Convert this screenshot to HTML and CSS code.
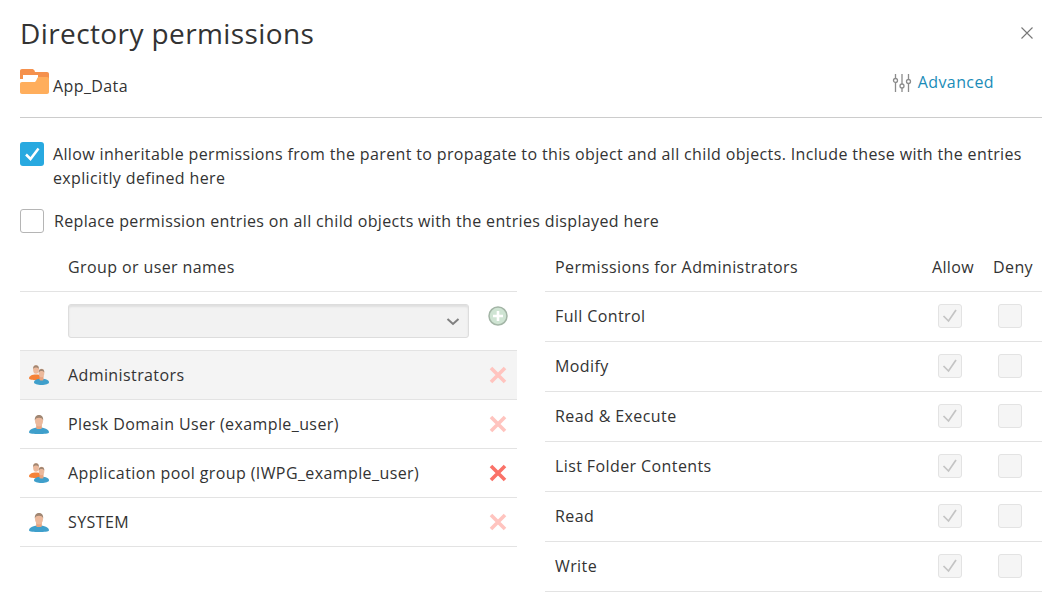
FILE: index.html
```html
<!DOCTYPE html>
<html lang="en">
<head>
<meta charset="utf-8">
<title>Directory permissions</title>
<link rel="stylesheet" href="styles.css">
</head>
<body>
<svg class="defs" width="0" height="0">
  <defs>
    <symbol id="user" viewBox="0 0 20 20">
      <path d="M0 18.500C0 15 5 13.500 10 13.500S20 15 20 18.500C20 19.500 15 20 10 20S0 19.500 0 18.500Z" fill="#3f9fcb"/>
      <path d="M7.200 11h5.600v3.200C12 15.400 8 15.400 7.200 14.200Z" fill="#e8a47f"/>
      <ellipse cx="10" cy="7" rx="4" ry="5.500" fill="#ecb99c"/>
      <path d="M5.800 6.500C5.600 2.500 7.500 1 10 1s4.400 1.500 4.200 5.500C13.500 4.500 12 3.800 10 3.800S6.500 4.500 5.800 6.500Z" fill="#a08672"/>
    </symbol>
    <symbol id="group" viewBox="0 0 20 20">
      <path d="M0 13.500C0 11 3 9.500 7 9.500s7 1.500 7 4c0 1-4 1.500-7 1.500S0 14.500 0 13.500Z" fill="#f58238"/>
      <ellipse cx="7" cy="4.500" rx="2.900" ry="4.200" fill="#ecb99c"/>
      <path d="M4.100 4C4 1.200 5.500 .3 7 .3S10 1.200 9.900 4C9 2.800 8 2.500 7 2.500S5 2.800 4.100 4Z" fill="#a08672"/>
      <path d="M5 17.500C5 15 8 13.800 12.500 13.800S20 15 20 17.500C20 18.800 16.500 20 12.500 20S5 18.800 5 17.500Z" fill="#3f9fcb"/>
      <path d="M10.500 11h4v4c-1 .8-3 .8-4 0Z" fill="#e8a47f"/>
      <ellipse cx="12.500" cy="8" rx="2.800" ry="4.200" fill="#ecb99c"/>
      <path d="M9.700 7.500C9.500 5 11 4 12.500 4s3 1 2.800 3.500C14.500 6.300 13.500 6 12.500 6s-2 .3-2.800 1.500Z" fill="#a08672"/>
    </symbol>
    <symbol id="cross" viewBox="0 0 18 18">
      <path d="M2 2l14 14M16 2L2 16" fill="none" stroke="currentColor" stroke-width="3.600"/>
    </symbol>
    <symbol id="tick" viewBox="0 0 24 24">
      <path d="M5.500 12l5 5L18 6" fill="none" stroke="currentColor" stroke-width="1.700"/>
    </symbol>
    <symbol id="tick-on" viewBox="0 0 24 24">
      <path d="M6 12.500l4.500 4.500L18.500 6.500" fill="none" stroke="currentColor" stroke-width="2.500"/>
    </symbol>
  </defs>
</svg>
<main class="dialog">
  <header class="title-row">
    <h1 class="title">Directory permissions</h1>
    <button class="close" type="button" aria-label="Close">
      <svg width="14" height="14" viewBox="0 0 14 14"><path d="M1.500 1.500l11 11M12.500 1.500l-11 11" fill="none" stroke="#777" stroke-width="1.100"/></svg>
    </button>
  </header>
  <div class="path-row">
    <div class="folder">
      <svg class="folder-icon" width="29" height="25" viewBox="0 0 29 25">
        <path d="M0 2C0 .8.800 0 2 0h10c1 0 1.800.5 2.500 1.500L15 3h12c1.200 0 2 .8 2 2v5H0Z" fill="#f5914d"/>
        <path d="M3 6h15v7H3Z" fill="#fff"/>
        <path d="M0 15c0-1.200.8-2 2-2h12c1.500 0 2-.8 3-3.300.4-1 1-1.700 2-1.700h8c1.200 0 2 .8 2 2v13c0 1.200-.8 2-2 2H2c-1.200 0-2-.8-2-2Z" fill="#ffae5c"/>
      </svg>
      <span>App_Data</span>
    </div>
    <a class="advanced" href="#">
      <svg width="20" height="20" viewBox="0 0 20 20" fill="none" stroke="#8c8c8c" stroke-width="1.300">
        <path d="M3.500 1v4.500M3.500 9.500V19M10 1v10M10 15v4M16.500 1v5.500M16.500 10.500V19"/>
        <circle cx="3.500" cy="7.500" r="2"/><circle cx="10" cy="13" r="2"/><circle cx="16.500" cy="8.500" r="2"/>
      </svg>
      <span>Advanced</span>
    </a>
  </div>
  <div class="options">
    <div class="option option-first">
      <span class="check check-on"><svg width="24" height="24"><use href="#tick-on"/></svg></span>
      <p>Allow inheritable permissions from the parent to propagate to this object and all child objects. Include these with the entries explicitly defined here</p>
    </div>
    <div class="option option-second">
      <span class="check"></span>
      <p>Replace permission entries on all child objects with the entries displayed here</p>
    </div>
  </div>
  <div class="columns">
    <section class="col">
      <div class="col-head names-head">Group or user names</div>
      <div class="add-row">
        <div class="select">
          <svg width="14" height="8" viewBox="0 0 14 8"><path d="M1.500 1l5.500 5 5.500-5" fill="none" stroke="#808080" stroke-width="2"/></svg>
        </div>
        <span class="add">
          <svg width="20" height="20" viewBox="0 0 20 20"><circle cx="10" cy="10" r="9" fill="#cfe4d3" stroke="#a3b5a6" stroke-width="1.500"/><path d="M10 5v10M5 10h10" stroke="#fff" stroke-width="2.600"/></svg>
        </span>
      </div>
      <div class="user selected"><svg class="avatar" width="20" height="20"><use href="#group"/></svg><span class="name">Administrators</span><svg class="del" width="18" height="18"><use href="#cross"/></svg></div>
      <div class="user"><svg class="avatar" width="20" height="20"><use href="#user"/></svg><span class="name">Plesk Domain User (example_user)</span><svg class="del" width="18" height="18"><use href="#cross"/></svg></div>
      <div class="user"><svg class="avatar" width="20" height="20"><use href="#group"/></svg><span class="name">Application pool group (IWPG_example_user)</span><svg class="del del-on" width="18" height="18"><use href="#cross"/></svg></div>
      <div class="user"><svg class="avatar" width="20" height="20"><use href="#user"/></svg><span class="name">SYSTEM</span><svg class="del" width="18" height="18"><use href="#cross"/></svg></div>
    </section>
    <section class="col">
      <div class="col-head perm-head">
        <span class="perm-name">Permissions for Administrators</span>
        <span class="perm-cell">Allow</span>
        <span class="perm-cell">Deny</span>
      </div>
      <div class="perm"><span class="perm-name">Full Control</span><span class="perm-cell"><span class="box"><svg width="24" height="24"><use href="#tick"/></svg></span></span><span class="perm-cell"><span class="box"></span></span></div>
      <div class="perm"><span class="perm-name">Modify</span><span class="perm-cell"><span class="box"><svg width="24" height="24"><use href="#tick"/></svg></span></span><span class="perm-cell"><span class="box"></span></span></div>
      <div class="perm"><span class="perm-name">Read &amp; Execute</span><span class="perm-cell"><span class="box"><svg width="24" height="24"><use href="#tick"/></svg></span></span><span class="perm-cell"><span class="box"></span></span></div>
      <div class="perm"><span class="perm-name">List Folder Contents</span><span class="perm-cell"><span class="box"><svg width="24" height="24"><use href="#tick"/></svg></span></span><span class="perm-cell"><span class="box"></span></span></div>
      <div class="perm"><span class="perm-name">Read</span><span class="perm-cell"><span class="box"><svg width="24" height="24"><use href="#tick"/></svg></span></span><span class="perm-cell"><span class="box"></span></span></div>
      <div class="perm"><span class="perm-name">Write</span><span class="perm-cell"><span class="box"><svg width="24" height="24"><use href="#tick"/></svg></span></span><span class="perm-cell"><span class="box"></span></span></div>
    </section>
  </div>
</main>
</body>
</html>
```
FILE: styles.css
```css
* { box-sizing: border-box; }
html, body { margin: 0; height: 100%; background: #fff; overflow: hidden; }
body { font: 16px/24px "Open Sans", sans-serif; letter-spacing: .4px; color: #333; }
.defs { position: absolute; }
.dialog { padding: 0 16px 0 20px; }

.title-row { display: flex; justify-content: space-between; align-items: center; height: 66px; }
.title { margin: 0; font-size: 28px; font-weight: 400; line-height: 66px; }
.close { display: flex; padding: 0; margin-right: 8px; border: 0; background: none; }

.path-row { display: flex; justify-content: space-between; height: 52px; border-bottom: 1px solid #ccc; }
.folder { display: flex; align-items: flex-start; gap: 4px; }
.folder-icon { margin-top: 3px; }
.folder span { margin-top: 8px; }
.advanced { display: flex; gap: 6px; align-items: flex-start; margin-right: 48px; color: #1a8cb8; text-decoration: none; }
.advanced svg { margin-top: 7px; }
.advanced span { margin-top: 4px; }

.option { display: flex; gap: 9px; }
.option p { margin: 0; letter-spacing: .355px; }
.option-first { margin-top: 24px; }
.option-second { margin-top: 19px; gap: 10px; }
.check { display: flex; flex: none; width: 24px; height: 24px; border: 1px solid #b5b5b5; border-radius: 3px; background: #fff; }
.check-on { border: 0; background: #28a9e0; color: #fff; }

.columns { display: flex; gap: 28px; margin-top: 12px; }
.col { flex: 1; min-width: 0; }
.col-head { display: flex; align-items: center; height: 47px; padding-bottom: 2px; border-bottom: 1px solid #e3e3e3; }
.names-head { padding-left: 48px; }
.perm-head { padding-left: 10px; }

.add-row { display: flex; height: 59px; padding: 12px 10px 0 48px; border-bottom: 1px solid #e3e3e3; }
.select { display: flex; align-items: center; justify-content: flex-end; flex: none; width: 401px; height: 34px; padding-right: 8px; border: 1px solid #ddd; border-radius: 3px; background: #f2f2f2; box-shadow: inset 0 2px 2px rgba(0, 0, 0, .08); }
.select svg { margin-top: 2px; }
.add { display: flex; margin-left: 19px; margin-top: 2px; }

.user { display: flex; align-items: center; height: 49px; padding-left: 9px; border-bottom: 1px solid #e3e3e3; }
.user.selected { background: #f4f4f4; }
.avatar { flex: none; }
.name { flex: 1; padding-left: 19px; }
.del { flex: none; margin-right: 10px; color: #ffc4bf; }
.del-on { color: #fa7268; }

.perm { display: flex; align-items: center; height: 50px; padding: 0 2px 1px 10px; border-bottom: 1px solid #e3e3e3; }
.perm-name { flex: 1; }
.perm-cell { display: flex; justify-content: center; flex: none; width: 60px; }
.perm-head .perm-cell:last-child { margin-right: -1px; }
.box { display: flex; width: 24px; height: 24px; border: 1px solid #e3e3e3; border-radius: 3px; background: #f5f5f5; color: #c4c4c4; }
.box svg, .check svg { flex: none; }
.box svg { margin: -1px; }
```
